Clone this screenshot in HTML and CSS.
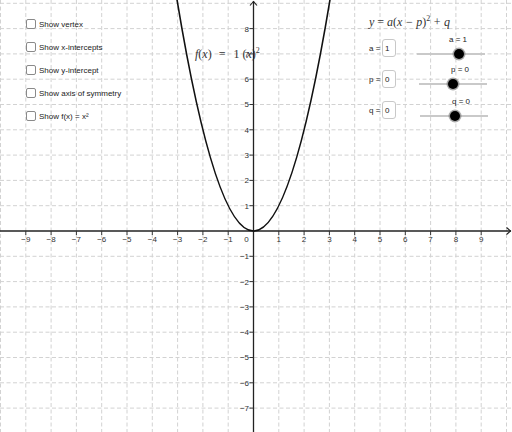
FILE: index.html
```html
<!DOCTYPE html>
<html>
<head>
<meta charset="utf-8">
<link rel="stylesheet" href="styles.css">
</head>
<body>
<div class="stage">
  <svg class="graph" width="512" height="432" viewBox="0 0 512 432">
    <g class="grid">
      <line x1="0.5" y1="0" x2="0.5" y2="432"/>
      <line x1="25.8" y1="0" x2="25.8" y2="432"/>
      <line x1="51.1" y1="0" x2="51.1" y2="432"/>
      <line x1="76.4" y1="0" x2="76.4" y2="432"/>
      <line x1="101.7" y1="0" x2="101.7" y2="432"/>
      <line x1="127" y1="0" x2="127" y2="432"/>
      <line x1="152.3" y1="0" x2="152.3" y2="432"/>
      <line x1="177.6" y1="0" x2="177.6" y2="432"/>
      <line x1="202.9" y1="0" x2="202.9" y2="432"/>
      <line x1="228.2" y1="0" x2="228.2" y2="432"/>
      <line x1="278.8" y1="0" x2="278.8" y2="432"/>
      <line x1="304.1" y1="0" x2="304.1" y2="432"/>
      <line x1="329.4" y1="0" x2="329.4" y2="432"/>
      <line x1="354.7" y1="0" x2="354.7" y2="432"/>
      <line x1="380" y1="0" x2="380" y2="432"/>
      <line x1="405.3" y1="0" x2="405.3" y2="432"/>
      <line x1="430.6" y1="0" x2="430.6" y2="432"/>
      <line x1="455.9" y1="0" x2="455.9" y2="432"/>
      <line x1="481.2" y1="0" x2="481.2" y2="432"/>
      <line x1="506.5" y1="0" x2="506.5" y2="432"/>
      <line x1="0" y1="3.3" x2="512" y2="3.3"/>
      <line x1="0" y1="28.6" x2="512" y2="28.6"/>
      <line x1="0" y1="53.9" x2="512" y2="53.9"/>
      <line x1="0" y1="79.2" x2="512" y2="79.2"/>
      <line x1="0" y1="104.5" x2="512" y2="104.5"/>
      <line x1="0" y1="129.8" x2="512" y2="129.8"/>
      <line x1="0" y1="155.1" x2="512" y2="155.1"/>
      <line x1="0" y1="180.4" x2="512" y2="180.4"/>
      <line x1="0" y1="205.7" x2="512" y2="205.7"/>
      <line x1="0" y1="256.3" x2="512" y2="256.3"/>
      <line x1="0" y1="281.6" x2="512" y2="281.6"/>
      <line x1="0" y1="306.9" x2="512" y2="306.9"/>
      <line x1="0" y1="332.2" x2="512" y2="332.2"/>
      <line x1="0" y1="357.5" x2="512" y2="357.5"/>
      <line x1="0" y1="382.8" x2="512" y2="382.8"/>
      <line x1="0" y1="408.1" x2="512" y2="408.1"/>
    </g>
    <g class="axes">
      <line x1="0" y1="231" x2="511" y2="231"/>
      <line x1="253.5" y1="1" x2="253.5" y2="432"/>
      <polyline points="506.5,227.5 510.5,231 506.5,234.5"/>
      <polyline points="250,5.5 253.5,1.5 257,5.5"/>
    </g>
    <g class="ticks">
      <line x1="25.8" y1="231" x2="25.8" y2="235"/>
      <line x1="51.1" y1="231" x2="51.1" y2="235"/>
      <line x1="76.4" y1="231" x2="76.4" y2="235"/>
      <line x1="101.7" y1="231" x2="101.7" y2="235"/>
      <line x1="127" y1="231" x2="127" y2="235"/>
      <line x1="152.3" y1="231" x2="152.3" y2="235"/>
      <line x1="177.6" y1="231" x2="177.6" y2="235"/>
      <line x1="202.9" y1="231" x2="202.9" y2="235"/>
      <line x1="228.2" y1="231" x2="228.2" y2="235"/>
      <line x1="278.8" y1="231" x2="278.8" y2="235"/>
      <line x1="304.1" y1="231" x2="304.1" y2="235"/>
      <line x1="329.4" y1="231" x2="329.4" y2="235"/>
      <line x1="354.7" y1="231" x2="354.7" y2="235"/>
      <line x1="380" y1="231" x2="380" y2="235"/>
      <line x1="405.3" y1="231" x2="405.3" y2="235"/>
      <line x1="430.6" y1="231" x2="430.6" y2="235"/>
      <line x1="455.9" y1="231" x2="455.9" y2="235"/>
      <line x1="481.2" y1="231" x2="481.2" y2="235"/>
      <line x1="249.5" y1="28.6" x2="253.5" y2="28.6"/>
      <line x1="249.5" y1="53.9" x2="253.5" y2="53.9"/>
      <line x1="249.5" y1="79.2" x2="253.5" y2="79.2"/>
      <line x1="249.5" y1="104.5" x2="253.5" y2="104.5"/>
      <line x1="249.5" y1="129.8" x2="253.5" y2="129.8"/>
      <line x1="249.5" y1="155.1" x2="253.5" y2="155.1"/>
      <line x1="249.5" y1="180.4" x2="253.5" y2="180.4"/>
      <line x1="249.5" y1="205.7" x2="253.5" y2="205.7"/>
      <line x1="249.5" y1="256.3" x2="253.5" y2="256.3"/>
      <line x1="249.5" y1="281.6" x2="253.5" y2="281.6"/>
      <line x1="249.5" y1="306.9" x2="253.5" y2="306.9"/>
      <line x1="249.5" y1="332.2" x2="253.5" y2="332.2"/>
      <line x1="249.5" y1="357.5" x2="253.5" y2="357.5"/>
      <line x1="249.5" y1="382.8" x2="253.5" y2="382.8"/>
      <line x1="249.5" y1="408.1" x2="253.5" y2="408.1"/>
    </g>
    <g class="xlabels">
      <text x="25.8" y="242">−9</text>
      <text x="51.1" y="242">−8</text>
      <text x="76.4" y="242">−7</text>
      <text x="101.7" y="242">−6</text>
      <text x="127" y="242">−5</text>
      <text x="152.3" y="242">−4</text>
      <text x="177.6" y="242">−3</text>
      <text x="202.9" y="242">−2</text>
      <text x="228.2" y="242">−1</text>
      <text x="246.5" y="242">0</text>
      <text x="278.8" y="242">1</text>
      <text x="304.1" y="242">2</text>
      <text x="329.4" y="242">3</text>
      <text x="354.7" y="242">4</text>
      <text x="380" y="242">5</text>
      <text x="405.3" y="242">6</text>
      <text x="430.6" y="242">7</text>
      <text x="455.9" y="242">8</text>
      <text x="481.2" y="242">9</text>
    </g>
    <g class="ylabels">
      <text x="249" y="31.5">8</text>
      <text x="249" y="56.8">7</text>
      <text x="249" y="82.1">6</text>
      <text x="249" y="107.4">5</text>
      <text x="249" y="132.7">4</text>
      <text x="249" y="158">3</text>
      <text x="249" y="183.3">2</text>
      <text x="249" y="208.6">1</text>
      <text x="249" y="259.2">−1</text>
      <text x="249" y="284.5">−2</text>
      <text x="249" y="309.8">−3</text>
      <text x="249" y="335.1">−4</text>
      <text x="249" y="360.4">−5</text>
      <text x="249" y="385.7">−6</text>
      <text x="249" y="411">−7</text>
    </g>
    <path class="curve" d="M175.07,-12.1 Q253.5,474.1 331.93,-12.1"/>
  </svg>

  <div class="checks">
    <label class="check"><span class="box"></span>Show vertex</label>
    <label class="check"><span class="box"></span>Show x-intercepts</label>
    <label class="check"><span class="box"></span>Show y-intercept</label>
    <label class="check"><span class="box"></span>Show axis of symmetry</label>
    <label class="check"><span class="box"></span>Show f(x) = x²</label>
  </div>

  <div class="math fx"><i>f</i>(<i>x</i>)<span class="opl">=</span>1 (<i>x</i>)<sup>2</sup></div>
  <div class="math eq"><i>y</i><span class="ops">=</span><i>a</i>(<i>x</i><span class="op2">−</span><i>p</i>)<sup>2</sup><span class="op2">+</span><i>q</i></div>

  <div class="inputs">
    <div class="inrow"><span>a = </span><span class="field">1</span></div>
    <div class="inrow"><span>p = </span><span class="field">0</span></div>
    <div class="inrow"><span>q = </span><span class="field">0</span></div>
  </div>

  <div class="slider sa">
    <div class="slabel">a = 1</div>
    <div class="track"><span class="knob" style="left:41.7px"></span></div>
  </div>
  <div class="slider sp">
    <div class="slabel">p = 0</div>
    <div class="track"><span class="knob" style="left:34.3px"></span></div>
  </div>
  <div class="slider sq">
    <div class="slabel">q = 0</div>
    <div class="track"><span class="knob" style="left:34.7px"></span></div>
  </div>
</div>
</body>
</html>
```

FILE: styles.css
```css
html, body {
  margin: 0;
  padding: 0;
  background: #fff;
  overflow: hidden;
}

.stage {
  position: relative;
  width: 512px;
  height: 432px;
  font-family: "Liberation Sans", Arial, sans-serif;
  color: #333;
}

.graph {
  position: absolute;
  left: 0;
  top: 0;
  display: block;
}

.grid line {
  stroke: #d2d2d2;
  stroke-width: 1;
  stroke-dasharray: 4 2.5;
}

.axes line {
  stroke: #222;
  stroke-width: 1.3;
}

.axes polyline {
  fill: none;
  stroke: #222;
  stroke-width: 1.1;
}

.ticks line {
  stroke: #333;
  stroke-width: 1;
}

.xlabels text,
.ylabels text {
  font-family: "Liberation Sans", Arial, sans-serif;
  font-size: 8px;
  fill: #333;
}

.xlabels text {
  text-anchor: middle;
}

.ylabels text {
  text-anchor: end;
}

.curve {
  fill: none;
  stroke: #111;
  stroke-width: 1.6;
}

.checks {
  position: absolute;
  left: 26px;
  top: 15px;
  display: flex;
  flex-direction: column;
  gap: 5px;
}

.check {
  display: flex;
  align-items: center;
  height: 18px;
  font-size: 8px;
  color: #222;
}

.box {
  width: 8px;
  height: 8px;
  border: 1px solid #8a8a8a;
  border-radius: 2px;
  background: #fff;
  margin-right: 3px;
}

.math {
  position: absolute;
  font-family: "Liberation Serif", "Times New Roman", serif;
  font-size: 12px;
  color: #333;
  white-space: nowrap;
  line-height: 14px;
}

.math i {
  font-style: italic;
}

.math sup {
  font-size: 8px;
  vertical-align: 5px;
  line-height: 0;
}

.math .opl {
  margin: 0 8px 0 7px;
}

.math .ops {
  margin: 0 3px;
}

.math .op2 {
  margin: 0 3.5px;
}

.fx {
  left: 195px;
  top: 47px;
}

.eq {
  left: 369px;
  top: 15px;
}

.inputs {
  position: absolute;
  left: 369px;
  top: 39px;
  display: flex;
  flex-direction: column;
  gap: 13px;
}

.inrow {
  display: flex;
  align-items: center;
  font-size: 8px;
  color: #222;
  height: 18px;
}

.inrow span:first-child {
  width: 13px;
  white-space: pre;
}

.field {
  box-sizing: border-box;
  width: 14px;
  height: 18px;
  border: 1px solid #c8c8c8;
  border-radius: 3px;
  padding-left: 2px;
  display: flex;
  align-items: center;
  background: #fff;
}

.slider {
  position: absolute;
  width: 68px;
}

.sa { left: 417px; top: 34px; }
.sp { left: 419px; top: 64px; }
.sq { left: 420px; top: 96px; }

.slabel {
  font-size: 8px;
  color: #222;
  text-align: center;
  padding-left: 14px;
  height: 12px;
  line-height: 12px;
}

.track {
  position: relative;
  margin-top: 7px;
  height: 2px;
  background: #c9c9c9;
}

.knob {
  position: absolute;
  top: 1px;
  width: 10px;
  height: 10px;
  margin-left: -5px;
  margin-top: -5px;
  border-radius: 50%;
  background: #000;
  box-shadow: 0 0 0 1.5px rgba(100,100,100,0.55);
}
```
